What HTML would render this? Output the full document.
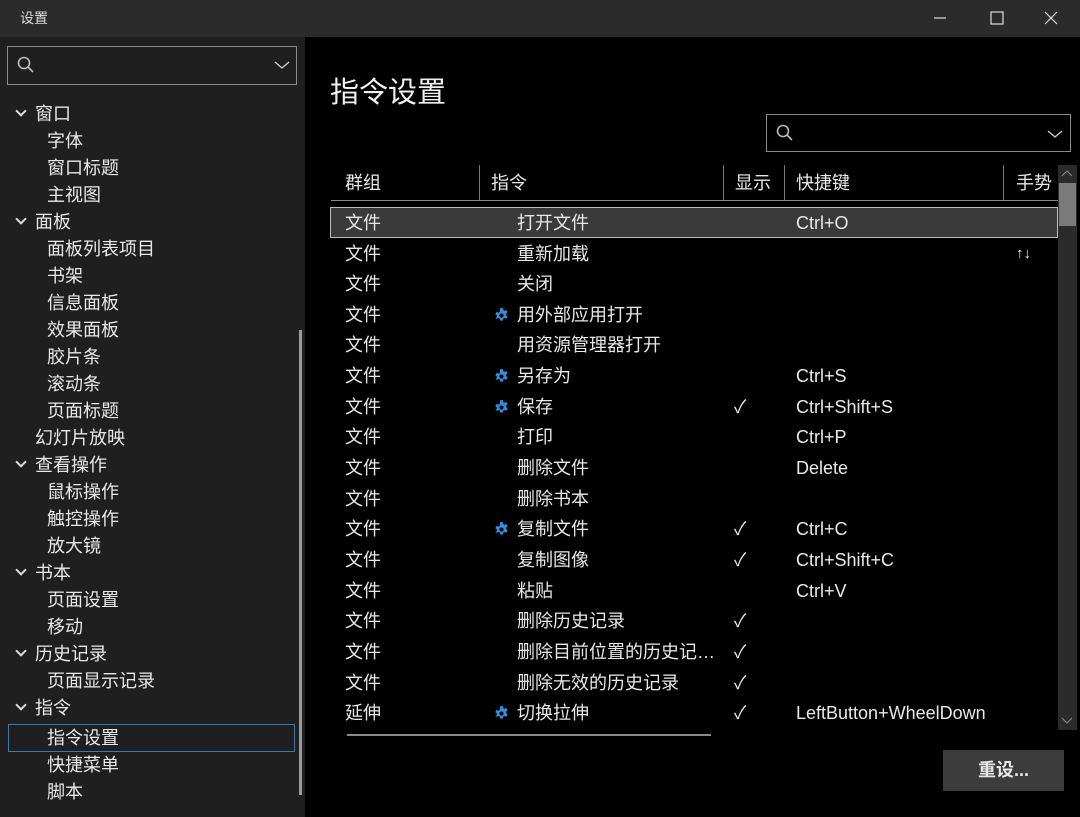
<!DOCTYPE html>
<html><head><meta charset="utf-8"><style>
*{margin:0;padding:0;box-sizing:border-box}
body{width:1080px;height:817px;background:#000;color:#e8e8e8;font-family:"Liberation Sans","Noto Sans CJK SC",sans-serif;position:relative;overflow:hidden}
.abs{position:absolute}
#tb{left:0;top:0;width:1080px;height:37px;background:#2b2b2b}
#side{left:0;top:37px;width:305px;height:780px;background:#1f1f1f}
.t{position:absolute;font-size:18px;line-height:27px;white-space:nowrap}
.chev{position:absolute;width:8px;height:8px;border-right:2px solid #ddd;border-bottom:2px solid #ddd;transform:rotate(45deg)}
.row{position:absolute;left:331px;width:727px;height:30px;font-size:18px;line-height:30px;white-space:nowrap}
.row span{position:absolute;top:0}
.gear{position:absolute;top:8px;left:163px;width:15px;height:15px}
</style></head><body>
<div id="tb" class="abs"></div>
<div class="abs" style="left:20px;top:8px;font-size:14px;color:#ddd">设置</div>
<svg class="abs" style="left:930px;top:8px" width="140" height="20" fill="none" stroke="#ddd" stroke-width="1.2">
<line x1="4" y1="10" x2="16" y2="10"/><rect x="61" y="4" width="12" height="12"/><line x1="115" y1="4" x2="127" y2="16"/><line x1="127" y1="4" x2="115" y2="16"/></svg>
<div id="side" class="abs"></div>
<div class="abs" style="left:7px;top:46px;width:290px;height:39px;border:1px solid #8a8a8a"></div>
<svg class="abs" style="left:16px;top:55px" width="20" height="20" fill="none" stroke="#bbb" stroke-width="1.6"><circle cx="8" cy="8" r="5.5"/><line x1="12" y1="12" x2="17" y2="17"/></svg>
<svg class="abs" style="left:274px;top:60px" width="16" height="10" fill="none" stroke="#ccc" stroke-width="1.4"><polyline points="1,2 8,8 15,2"/></svg>

<div class="chev" style="left:17px;top:107px"></div><div class="t" style="left:35px;top:101px">窗口</div>
<div class="t" style="left:47px;top:128px">字体</div>
<div class="t" style="left:47px;top:155px">窗口标题</div>
<div class="t" style="left:47px;top:182px">主视图</div>
<div class="chev" style="left:17px;top:215px"></div><div class="t" style="left:35px;top:209px">面板</div>
<div class="t" style="left:47px;top:236px">面板列表项目</div>
<div class="t" style="left:47px;top:263px">书架</div>
<div class="t" style="left:47px;top:290px">信息面板</div>
<div class="t" style="left:47px;top:317px">效果面板</div>
<div class="t" style="left:47px;top:344px">胶片条</div>
<div class="t" style="left:47px;top:371px">滚动条</div>
<div class="t" style="left:47px;top:398px">页面标题</div>
<div class="t" style="left:35px;top:425px">幻灯片放映</div>
<div class="chev" style="left:17px;top:458px"></div><div class="t" style="left:35px;top:452px">查看操作</div>
<div class="t" style="left:47px;top:479px">鼠标操作</div>
<div class="t" style="left:47px;top:506px">触控操作</div>
<div class="t" style="left:47px;top:533px">放大镜</div>
<div class="chev" style="left:17px;top:566px"></div><div class="t" style="left:35px;top:560px">书本</div>
<div class="t" style="left:47px;top:587px">页面设置</div>
<div class="t" style="left:47px;top:614px">移动</div>
<div class="chev" style="left:17px;top:647px"></div><div class="t" style="left:35px;top:641px">历史记录</div>
<div class="t" style="left:47px;top:668px">页面显示记录</div>
<div class="chev" style="left:17px;top:701px"></div><div class="t" style="left:35px;top:695px">指令</div>
<div class="abs" style="left:8px;top:724px;width:287px;height:28px;border:1px solid #2a7fc4;background:#1f1f1f"></div>
<div class="t" style="left:47px;top:725px">指令设置</div>
<div class="t" style="left:47px;top:752px">快捷菜单</div>
<div class="t" style="left:47px;top:779px">脚本</div>
<div class="abs" style="left:299px;top:330px;width:3px;height:465px;background:#9a9a9a"></div>

<div class="abs" style="left:330px;top:69px;font-size:29px;color:#f0f0f0">指令设置</div>
<div class="abs" style="left:766px;top:114px;width:305px;height:38px;border:1px solid #8a8a8a"></div>
<svg class="abs" style="left:775px;top:123px" width="20" height="20" fill="none" stroke="#bbb" stroke-width="1.6"><circle cx="8" cy="8" r="5.5"/><line x1="12" y1="12" x2="17" y2="17"/></svg>
<svg class="abs" style="left:1047px;top:129px" width="16" height="10" fill="none" stroke="#ccc" stroke-width="1.4"><polyline points="1,2 8,8 15,2"/></svg>

<div class="abs" style="left:331px;top:165px;width:727px;height:36px;border-bottom:1px solid #8a8a8a;font-size:18px;line-height:36px">
<span class="abs" style="left:14px">群组</span><span class="abs" style="left:160px">指令</span><span class="abs" style="left:404px">显示</span><span class="abs" style="left:465px">快捷键</span><span class="abs" style="left:685px">手势</span>
<div class="abs" style="left:148px;top:0;width:1px;height:35px;background:#777"></div>
<div class="abs" style="left:392px;top:0;width:1px;height:35px;background:#777"></div>
<div class="abs" style="left:453px;top:0;width:1px;height:35px;background:#777"></div>
<div class="abs" style="left:672px;top:0;width:1px;height:35px;background:#777"></div>
</div>
<div class="abs" style="left:1058px;top:165px;width:19px;height:565px;background:#2b2b2b"></div>
<div class="abs" style="left:1059px;top:183px;width:17px;height:43px;background:#7a7a7a"></div>
<svg class="abs" style="left:1061px;top:170px" width="12" height="8" fill="none" stroke="#888"><polyline points="1,6 6,1 11,6"/></svg>
<svg class="abs" style="left:1061px;top:717px" width="12" height="8" fill="none" stroke="#888"><polyline points="1,1 6,6 11,1"/></svg>

<div class="abs" style="left:330px;top:207px;width:728px;height:31px;background:#3a3a3a;border:1px solid #bbb"></div>

<svg width="0" height="0" style="position:absolute"><defs><symbol id="g" viewBox="0 0 16 16"><path fill="#2f8ee0" fill-rule="evenodd" d="M6.6 0h2.8l.4 2.2 1.3.7 2.1-.8 1.4 2.4-1.7 1.5v1.5l1.7 1.5-1.4 2.4-2.1-.8-1.3.7-.4 2.2H6.6l-.4-2.2-1.3-.7-2.1.8L1.4 11l1.7-1.5V8L1.4 6.5 2.8 4.1l2.1.8 1.3-.7zM8 5.8a2.2 2.2 0 100 4.4 2.2 2.2 0 000-4.4z"/></symbol></defs></svg>

<div class="row" style="top:208px"><span style="left:14px">文件</span><span style="left:186px">打开文件</span><span style="left:465px">Ctrl+O</span></div>
<div class="row" style="top:239px"><span style="left:14px">文件</span><span style="left:186px">重新加载</span><span style="left:685px;font-size:15px">↑↓</span></div>
<div class="row" style="top:269px"><span style="left:14px">文件</span><span style="left:186px">关闭</span></div>
<div class="row" style="top:300px"><span style="left:14px">文件</span><svg class="gear"><use href="#g"/></svg><span style="left:186px">用外部应用打开</span></div>
<div class="row" style="top:330px"><span style="left:14px">文件</span><span style="left:186px">用资源管理器打开</span></div>
<div class="row" style="top:361px"><span style="left:14px">文件</span><svg class="gear"><use href="#g"/></svg><span style="left:186px">另存为</span><span style="left:465px">Ctrl+S</span></div>
<div class="row" style="top:392px"><span style="left:14px">文件</span><svg class="gear"><use href="#g"/></svg><span style="left:186px">保存</span><span style="left:403px">✓</span><span style="left:465px">Ctrl+Shift+S</span></div>
<div class="row" style="top:422px"><span style="left:14px">文件</span><span style="left:186px">打印</span><span style="left:465px">Ctrl+P</span></div>
<div class="row" style="top:453px"><span style="left:14px">文件</span><span style="left:186px">删除文件</span><span style="left:465px">Delete</span></div>
<div class="row" style="top:484px"><span style="left:14px">文件</span><span style="left:186px">删除书本</span></div>
<div class="row" style="top:514px"><span style="left:14px">文件</span><svg class="gear"><use href="#g"/></svg><span style="left:186px">复制文件</span><span style="left:403px">✓</span><span style="left:465px">Ctrl+C</span></div>
<div class="row" style="top:545px"><span style="left:14px">文件</span><span style="left:186px">复制图像</span><span style="left:403px">✓</span><span style="left:465px">Ctrl+Shift+C</span></div>
<div class="row" style="top:576px"><span style="left:14px">文件</span><span style="left:186px">粘贴</span><span style="left:465px">Ctrl+V</span></div>
<div class="row" style="top:606px"><span style="left:14px">文件</span><span style="left:186px">删除历史记录</span><span style="left:403px">✓</span></div>
<div class="row" style="top:637px"><span style="left:14px">文件</span><span style="left:186px">删除目前位置的历史记…</span><span style="left:403px">✓</span></div>
<div class="row" style="top:668px"><span style="left:14px">文件</span><span style="left:186px">删除无效的历史记录</span><span style="left:403px">✓</span></div>
<div class="row" style="top:698px"><span style="left:14px">延伸</span><svg class="gear"><use href="#g"/></svg><span style="left:186px">切换拉伸</span><span style="left:403px">✓</span><span style="left:465px;width:206px;overflow:hidden">LeftButton+WheelDown</span></div>

<div class="abs" style="left:347px;top:734px;width:364px;height:2px;background:#8a8a8a"></div>
<div class="abs" style="left:943px;top:750px;width:121px;height:41px;background:#3c3c3c;font-size:18px;font-weight:bold;line-height:41px;text-align:center">重设...</div>
</body></html>
